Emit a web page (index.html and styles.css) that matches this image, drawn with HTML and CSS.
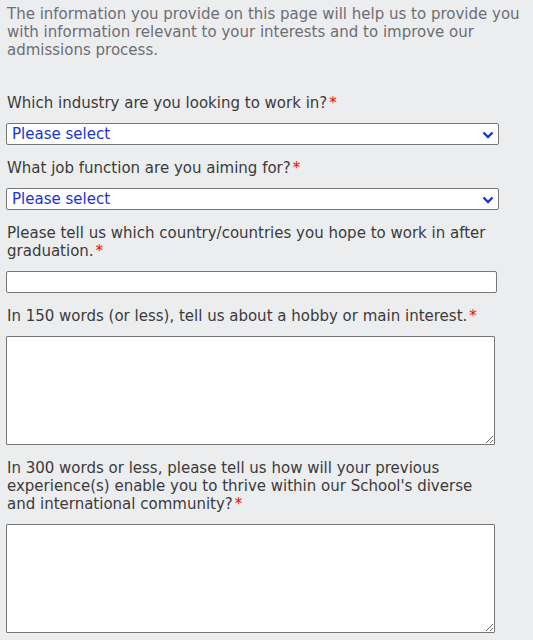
FILE: index.html
```html
<!DOCTYPE html>
<html lang="en">
<head>
<meta charset="utf-8">
<title>Career interests</title>
<link rel="stylesheet" href="styles.css">
</head>
<body>
<form class="form">
  <p class="intro">The information you provide on this page will help us to provide you with information relevant to your interests and to improve our admissions process.</p>

  <div class="field">
    <label class="label" for="industry">Which industry are you looking to work in?<span class="req">*</span></label>
    <div class="select-wrap">
      <select id="industry" class="select"><option>Please select</option></select>
      <svg class="chev" width="12" height="8" viewBox="0 0 12 8"><path d="M1.5 1.5 L6 6 L10.5 1.5" fill="none" stroke="#1a35d0" stroke-width="2.4"/></svg>
    </div>
  </div>

  <div class="field">
    <label class="label" for="func">What job function are you aiming for?<span class="req">*</span></label>
    <div class="select-wrap">
      <select id="func" class="select"><option>Please select</option></select>
      <svg class="chev" width="12" height="8" viewBox="0 0 12 8"><path d="M1.5 1.5 L6 6 L10.5 1.5" fill="none" stroke="#1a35d0" stroke-width="2.4"/></svg>
    </div>
  </div>

  <div class="field">
    <label class="label" for="country">Please tell us which country/countries you hope to work in after graduation.<span class="req">*</span></label>
    <input id="country" class="input" type="text">
  </div>

  <div class="field">
    <label class="label" for="hobby">In 150 words (or less), tell us about a hobby or main interest.<span class="req">*</span></label>
    <textarea id="hobby" class="textarea"></textarea>
  </div>

  <div class="field">
    <label class="label" for="exp">In 300 words or less, please tell us how will your previous experience(s) enable you to thrive within our School's diverse and international community?<span class="req">*</span></label>
    <textarea id="exp" class="textarea"></textarea>
  </div>
</form>
</body>
</html>
```

FILE: styles.css
```css
html, body {
  margin: 0;
  padding: 0;
  background: #ecedef;
}
body {
  font-family: "DejaVu Sans", Verdana, sans-serif;
  font-size: 15px;
  line-height: 18px;
  color: #3a3a3a;
}
.form {
  display: flex;
  flex-direction: column;
  padding: 5px 0 0 6px;
  width: 518px;
}
.intro {
  margin: 0 0 35px 1px;
  color: #6e6e73;
}
.field {
  display: flex;
  flex-direction: column;
  gap: 11px;
  margin-bottom: 14px;
}
.label {
  display: block;
  width: 486px;
  padding-left: 1px;
  color: #3b3b3b;
}
.req {
  display: inline-block;
  margin-left: 2px;
  color: #ff0000;
}
.select-wrap {
  position: relative;
  width: 493px;
}
.select {
  appearance: none;
  -webkit-appearance: none;
  display: block;
  box-sizing: border-box;
  width: 493px;
  height: 22px;
  margin: 0;
  padding: 0 20px 0 5px;
  border: 1px solid #767676;
  border-radius: 2px;
  background: #fff;
  font: inherit;
  line-height: 20px;
  color: #1a35d0;
}
.chev {
  position: absolute;
  right: 5px;
  top: 8px;
  pointer-events: none;
}
.input {
  display: block;
  box-sizing: border-box;
  width: 491px;
  height: 22px;
  margin: 0;
  padding: 0 4px;
  border: 1px solid #767676;
  border-radius: 2px;
  background: #fff;
  font: inherit;
}
.textarea {
  display: block;
  box-sizing: border-box;
  width: 489px;
  height: 109px;
  margin: 0;
  padding: 2px;
  border: 1px solid #767676;
  border-radius: 1px;
  background: #fff;
  font: inherit;
  resize: both;
}
```
